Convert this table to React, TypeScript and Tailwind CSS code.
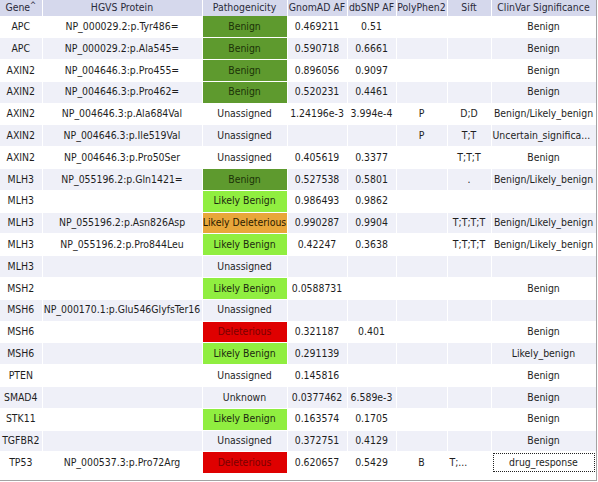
type Path = 'Benign' | 'Likely Benign' | 'Likely Deleterious' | 'Deleterious' | 'Unassigned' | 'Unknown' | '';

type Row = {
  gene: string;
  hgvs: string;
  path: Path;
  gnomad: string;
  dbsnp: string;
  polyphen: string;
  sift: string;
  clinvar: string;
};

const rows: Row[] = [
  { gene: 'APC', hgvs: 'NP_000029.2:p.Tyr486=', path: 'Benign', gnomad: '0.469211', dbsnp: '0.51', polyphen: '', sift: '', clinvar: 'Benign' },
  { gene: 'APC', hgvs: 'NP_000029.2:p.Ala545=', path: 'Benign', gnomad: '0.590718', dbsnp: '0.6661', polyphen: '', sift: '', clinvar: 'Benign' },
  { gene: 'AXIN2', hgvs: 'NP_004646.3:p.Pro455=', path: 'Benign', gnomad: '0.896056', dbsnp: '0.9097', polyphen: '', sift: '', clinvar: 'Benign' },
  { gene: 'AXIN2', hgvs: 'NP_004646.3:p.Pro462=', path: 'Benign', gnomad: '0.520231', dbsnp: '0.4461', polyphen: '', sift: '', clinvar: 'Benign' },
  { gene: 'AXIN2', hgvs: 'NP_004646.3:p.Ala684Val', path: 'Unassigned', gnomad: '1.24196e-3', dbsnp: '3.994e-4', polyphen: 'P', sift: 'D;D', clinvar: 'Benign/Likely_benign' },
  { gene: 'AXIN2', hgvs: 'NP_004646.3:p.Ile519Val', path: 'Unassigned', gnomad: '', dbsnp: '', polyphen: 'P', sift: 'T;T', clinvar: 'Uncertain_significance' },
  { gene: 'AXIN2', hgvs: 'NP_004646.3:p.Pro50Ser', path: 'Unassigned', gnomad: '0.405619', dbsnp: '0.3377', polyphen: '', sift: 'T;T;T', clinvar: 'Benign' },
  { gene: 'MLH3', hgvs: 'NP_055196.2:p.Gln1421=', path: 'Benign', gnomad: '0.527538', dbsnp: '0.5801', polyphen: '', sift: '.', clinvar: 'Benign/Likely_benign' },
  { gene: 'MLH3', hgvs: '', path: 'Likely Benign', gnomad: '0.986493', dbsnp: '0.9862', polyphen: '', sift: '', clinvar: '' },
  { gene: 'MLH3', hgvs: 'NP_055196.2:p.Asn826Asp', path: 'Likely Deleterious', gnomad: '0.990287', dbsnp: '0.9904', polyphen: '', sift: 'T;T;T;T', clinvar: 'Benign/Likely_benign' },
  { gene: 'MLH3', hgvs: 'NP_055196.2:p.Pro844Leu', path: 'Likely Benign', gnomad: '0.42247', dbsnp: '0.3638', polyphen: '', sift: 'T;T;T;T', clinvar: 'Benign/Likely_benign' },
  { gene: 'MLH3', hgvs: '', path: 'Unassigned', gnomad: '', dbsnp: '', polyphen: '', sift: '', clinvar: '' },
  { gene: 'MSH2', hgvs: '', path: 'Likely Benign', gnomad: '0.0588731', dbsnp: '', polyphen: '', sift: '', clinvar: 'Benign' },
  { gene: 'MSH6', hgvs: 'NP_000170.1:p.Glu546GlyfsTer16', path: 'Unassigned', gnomad: '', dbsnp: '', polyphen: '', sift: '', clinvar: '' },
  { gene: 'MSH6', hgvs: '', path: 'Deleterious', gnomad: '0.321187', dbsnp: '0.401', polyphen: '', sift: '', clinvar: 'Benign' },
  { gene: 'MSH6', hgvs: '', path: 'Likely Benign', gnomad: '0.291139', dbsnp: '', polyphen: '', sift: '', clinvar: 'Likely_benign' },
  { gene: 'PTEN', hgvs: '', path: 'Unassigned', gnomad: '0.145816', dbsnp: '', polyphen: '', sift: '', clinvar: 'Benign' },
  { gene: 'SMAD4', hgvs: '', path: 'Unknown', gnomad: '0.0377462', dbsnp: '6.589e-3', polyphen: '', sift: '', clinvar: 'Benign' },
  { gene: 'STK11', hgvs: '', path: 'Likely Benign', gnomad: '0.163574', dbsnp: '0.1705', polyphen: '', sift: '', clinvar: 'Benign' },
  { gene: 'TGFBR2', hgvs: '', path: 'Unassigned', gnomad: '0.372751', dbsnp: '0.4129', polyphen: '', sift: '', clinvar: 'Benign' },
  { gene: 'TP53', hgvs: 'NP_000537.3:p.Pro72Arg', path: 'Deleterious', gnomad: '0.620657', dbsnp: '0.5429', polyphen: 'B', sift: 'T;...', clinvar: 'drug_response' },
];

const pathStyle: Record<string, string> = {
  Benign: 'bg-[#5e9a2e] text-[#1c3308]',
  'Likely Benign': 'bg-[#90ee40] text-[#1c2a10]',
  'Likely Deleterious': 'bg-[#e8a73a] text-[#2a1a00]',
  Deleterious: 'bg-[#df0000] text-[#7a0000]',
};

const cell = 'border-r border-b border-white whitespace-nowrap overflow-hidden p-0';

export default function App() {
  return (
    <div
      className="w-[598px] h-[482px] bg-white text-[10.4px] text-[#1e1e1e] overflow-hidden"
      style={{ fontFamily: '"DejaVu Sans Condensed", "Liberation Sans", sans-serif' }}
    >
      <div className="w-[597px] h-[481px] border-r border-b border-[#a3a3a3] overflow-hidden">
        <table className="table-fixed border-collapse w-[596px]">
          <colgroup>
            <col className="w-[42px]" />
            <col className="w-[160px]" />
            <col className="w-[85px]" />
            <col className="w-[60px]" />
            <col className="w-[49px]" />
            <col className="w-[51px]" />
            <col className="w-[44px]" />
            <col className="w-[105px]" />
          </colgroup>
          <thead>
            <tr className="h-[16px] bg-[#d5d8ec] text-[#2a2a3a]">
              <th className="font-normal border-r border-white p-0 text-center whitespace-nowrap">
                Gene<span className="text-[8px] align-top">^</span>
              </th>
              <th className="font-normal border-r border-white p-0">HGVS Protein</th>
              <th className="font-normal border-r border-white p-0">Pathogenicity</th>
              <th className="font-normal border-r border-white p-0 whitespace-nowrap">GnomAD AF</th>
              <th className="font-normal border-r border-white p-0 whitespace-nowrap">dbSNP AF</th>
              <th className="font-normal border-r border-white p-0">PolyPhen2</th>
              <th className="font-normal border-r border-white p-0">Sift</th>
              <th className="font-normal border-r border-white p-0 whitespace-nowrap">ClinVar Significance</th>
            </tr>
          </thead>
          <tbody>
            {rows.map((r, i) => (
              <tr key={i} className={`h-[21.8px] ${i % 2 === 1 ? 'bg-[#eff0f8]' : 'bg-white'}`}>
                <td className={`${cell} text-center overflow-visible`}>{r.gene}</td>
                <td className={`${cell} text-center`}>{r.hgvs}</td>
                <td className={`${cell} text-center ${pathStyle[r.path] ?? ''}`}>{r.path}</td>
                <td className={`${cell} text-center`}>{r.gnomad}</td>
                <td className={`${cell} text-center`}>{r.dbsnp}</td>
                <td className={`${cell} text-center`}>{r.polyphen}</td>
                <td className={`${cell} ${r.sift === 'T;...' ? 'text-left pl-[2px]' : 'text-center'}`}>{r.sift}</td>
                {r.clinvar === 'drug_response' ? (
                  <td className={`${cell} text-center`}>
                    <div className="mx-[1px] h-[19px] leading-[17px] border border-dotted border-[#222]">
                      {r.clinvar}
                    </div>
                  </td>
                ) : r.clinvar === 'Uncertain_significance' ? (
                  <td className={`${cell} text-left pl-[1px]`}>Uncertain_significa...</td>
                ) : (
                  <td className={`${cell} text-center`}>{r.clinvar}</td>
                )}
              </tr>
            ))}
          </tbody>
        </table>
      </div>
    </div>
  );
}
